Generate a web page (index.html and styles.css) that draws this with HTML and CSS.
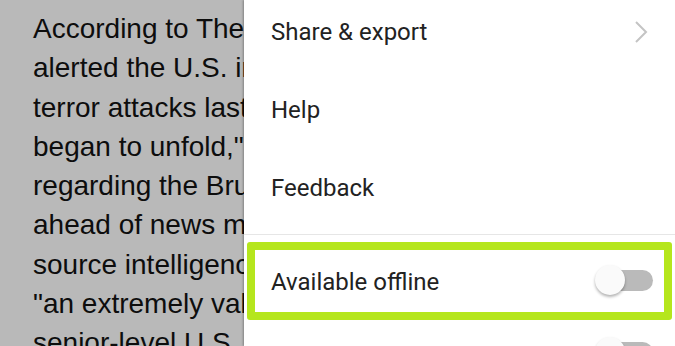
FILE: index.html
```html
<!DOCTYPE html>
<html>
<head>
<meta charset="utf-8">
<link rel="stylesheet" href="styles.css">
</head>
<body>
<div class="screen">
  <div class="article">
    <p class="line">According to The Daily Beast, Dataminr</p>
    <p class="line">alerted the U.S. intelligence community</p>
    <p class="line">terror attacks last week "within minutes</p>
    <p class="line">began to unfold," and also sent alerts</p>
    <p class="line">regarding the Brussels attacks well</p>
    <p class="line">ahead of news media. The open</p>
    <p class="line">source intelligence service was called</p>
    <p class="line">"an extremely valuable tool" by one</p>
    <p class="line">senior-level U.S. official.</p>
  </div>
  <div class="panel">
    <div class="menu">
      <div class="item">
        <span class="label">Share &amp; export</span>
        <svg class="chevron" width="14" height="24" viewBox="0 0 14 24"><polyline points="2,2 12,12 2,22" fill="none" stroke="#c4c4c4" stroke-width="2"/></svg>
      </div>
      <div class="item"><span class="label">Help</span></div>
      <div class="item"><span class="label">Feedback</span></div>
      <div class="divider"></div>
      <div class="item highlighted">
        <span class="label">Available offline</span>
        <span class="switch"><span class="track"></span><span class="knob"></span></span>
        <span class="highlight"></span>
      </div>
      <div class="item item-next">
        <span class="label"></span>
        <span class="switch"><span class="track"></span><span class="knob"></span></span>
      </div>
    </div>
  </div>
</div>
</body>
</html>
```

FILE: styles.css
```css
html, body {
  margin: 0;
  padding: 0;
  width: 675px;
  height: 346px;
  overflow: hidden;
  background: #b9b9b9;
}

.screen {
  display: flex;
  width: 675px;
  height: 346px;
  overflow: hidden;
}

.article {
  width: 244px;
  flex: none;
  overflow: hidden;
  box-sizing: border-box;
  padding: 9px 0 0 33px;
  font-family: "Liberation Sans", Arial, sans-serif;
  font-size: 28px;
  line-height: 39.3px;
  color: #0d0d0d;
}

.line {
  margin: 0;
  white-space: nowrap;
}

.panel {
  position: relative;
  flex: 1;
  background: #ffffff;
  box-shadow: -1px 0 2px rgba(0, 0, 0, 0.3);
  overflow: hidden;
}

.menu {
  margin-top: -7px;
  display: flex;
  flex-direction: column;
}

.item {
  position: relative;
  height: 78px;
  display: flex;
  align-items: center;
  justify-content: space-between;
  padding: 0 22px 0 27px;
  font-family: Roboto, "Noto Sans", sans-serif;
  font-size: 24px;
  color: #222222;
}

.chevron {
  margin-right: 5px;
}

.divider {
  height: 1px;
  background: #e6e6e6;
  margin: 7px 0 8px;
}

.switch {
  position: relative;
  width: 58px;
  height: 30px;
  display: flex;
  align-items: center;
  justify-content: flex-end;
  margin-top: -4px;
}

.track {
  width: 50px;
  height: 21px;
  border-radius: 11px;
  background: #bababa;
}

.knob {
  position: absolute;
  left: 0;
  top: 0;
  width: 30px;
  height: 30px;
  border-radius: 50%;
  background: #fafafa;
  box-shadow: 0 2px 3px rgba(0, 0, 0, 0.3);
}

.highlight {
  position: absolute;
  left: 3px;
  right: 3px;
  top: -1px;
  bottom: 1px;
  border: 8px solid #b5e61d;
  border-radius: 3px;
  pointer-events: none;
}

.item-next .switch {
  margin-top: -16px;
}
```
